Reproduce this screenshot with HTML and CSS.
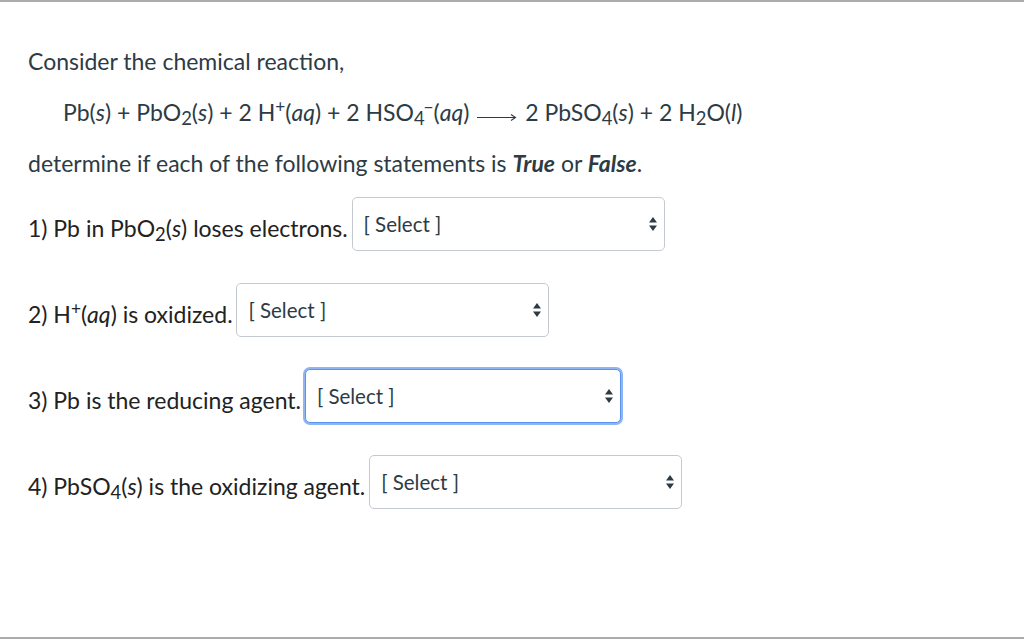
FILE: index.html
```html
<!DOCTYPE html>
<html lang="en">
  <head>
    <meta charset="UTF-8" />
    <title>Quiz question</title>
    <link rel="stylesheet" href="styles.css">
  </head>
  <body>
    <div class="page">
      <div class="question">
        <p>Consider the chemical reaction,</p>
        <p class="equation">
          Pb(<i>s</i>) + PbO<sub>2</sub>(<i>s</i>) + 2 H<sup>+</sup>(<i>aq</i>) + 2 HSO<sub>4</sub><sup class="minus">&minus;</sup>(<i>aq</i>)
          <svg class="arrow" width="40" height="10" viewBox="0 0 40 10"><path d="M0 5.5H38M34 2.5L38.5 5.5L34 8.5" fill="none" stroke="#2d3b45" stroke-width="1.1"/></svg>
          2 PbSO<sub>4</sub>(<i>s</i>) + 2 H<sub>2</sub>O(<i>l</i>)
        </p>
        <p class="lead">determine if each of the following statements is <b><i>True</i></b> or <b><i>False</i></b>.</p>

        <div class="item">
          1) Pb in PbO<sub>2</sub>(<i>s</i>) loses electrons.
          <span class="pick">
            <select><option>[ Select ]</option><option>True</option><option>False</option></select>
            <svg class="updown" width="8" height="14" viewBox="0 0 8 14"><path d="M4 0L8 5.5H0Z M0 8.5H8L4 14Z" fill="#2d3b45"/></svg>
          </span>
        </div>
        <div class="item">
          2) H<sup>+</sup>(<i>aq</i>) is oxidized.
          <span class="pick">
            <select><option>[ Select ]</option><option>True</option><option>False</option></select>
            <svg class="updown" width="8" height="14" viewBox="0 0 8 14"><path d="M4 0L8 5.5H0Z M0 8.5H8L4 14Z" fill="#2d3b45"/></svg>
          </span>
        </div>
        <div class="item">
          3) Pb is the reducing agent.
          <span class="pick focused">
            <select><option>[ Select ]</option><option>True</option><option>False</option></select>
            <svg class="updown" width="8" height="14" viewBox="0 0 8 14"><path d="M4 0L8 5.5H0Z M0 8.5H8L4 14Z" fill="#2d3b45"/></svg>
          </span>
        </div>
        <div class="item">
          4) PbSO<sub>4</sub>(<i>s</i>) is the oxidizing agent.
          <span class="pick">
            <select><option>[ Select ]</option><option>True</option><option>False</option></select>
            <svg class="updown" width="8" height="14" viewBox="0 0 8 14"><path d="M4 0L8 5.5H0Z M0 8.5H8L4 14Z" fill="#2d3b45"/></svg>
          </span>
        </div>
      </div>
    </div>
  </body>
</html>
```

FILE: styles.css
```css
* {
  margin: 0;
  padding: 0;
  box-sizing: border-box;
}
html,
body {
  width: 100%;
  height: 100%;
  background: #fff;
}
.page {
  height: 639px;
  border-top: 2px solid #acacac;
  border-bottom: 2px solid #acacac;
  font-family: Lato, "Liberation Sans", sans-serif;
  font-size: 23px;
  color: #2d3b45;
}
.question {
  padding: 44px 0 0 28px;
}
p {
  line-height: 30px;
  margin-bottom: 21px;
}
p.lead {
  margin-bottom: 19px;
}
.equation {
  padding-left: 35px;
}
sub {
  font-size: 0.8em;
  vertical-align: -0.22em;
  line-height: 0;
}
sup {
  font-size: 0.75em;
  vertical-align: 0.45em;
  line-height: 0;
}
sup.minus {
  margin-left: -1px;
}
.arrow {
  vertical-align: -1px;
  margin: 0 2px;
}
.item {
  color: #222;
  line-height: 30px;
  margin-bottom: 32px;
}
.pick {
  position: relative;
  display: inline-block;
  vertical-align: 5px;
  margin-left: -2px;
}
.pick select {
  appearance: none;
  -webkit-appearance: none;
  width: 313px;
  height: 54px;
  padding: 0 30px 0 11px;
  border: 1px solid #c4cacf;
  border-radius: 5px;
  background: #fff;
  font-family: Lato, "Liberation Sans", sans-serif;
  font-size: 20.5px;
  color: #2d3b45;
  outline: none;
}
.pick.focused select {
  width: 316px;
  border: 1px solid #5b94ec;
  box-shadow: 0 0 0 2px #8fb6f3;
}
.pick .updown {
  position: absolute;
  right: 8px;
  top: 20px;
}
```
